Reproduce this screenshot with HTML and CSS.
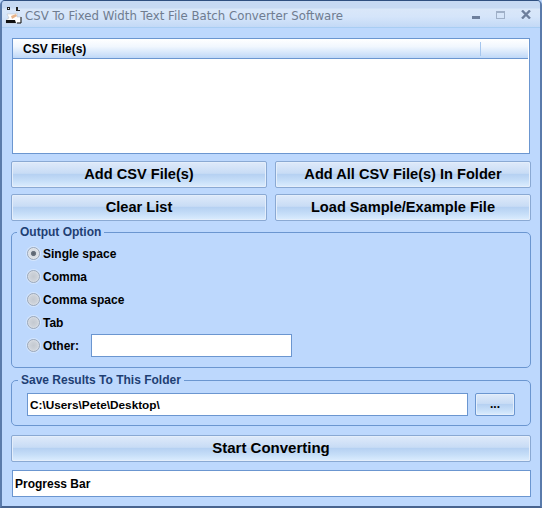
FILE: index.html
```html
<!DOCTYPE html>
<html lang="en">
<head>
    <meta charset="utf-8">
    <title>CSV To Fixed Width Text File Batch Converter Software</title>
    <link rel="stylesheet" href="styles.css">
</head>
<body>
    <div class="window">
        <div class="titlebar">
            <svg class="app-icon" width="18" height="18" viewBox="0 0 18 18">
                <rect x="2" y="1" width="3" height="3" fill="#222"/>
                <rect x="3" y="2" width="1" height="1" fill="#fff"/>
                <rect x="11" y="1" width="2" height="4" fill="#222"/>
                <rect x="11" y="4" width="4" height="1" fill="#222"/>
                <path d="M2 8h7l3-1v4h4v6H1v-3l3-2z" fill="#fff" stroke="#bbb" stroke-width="0.5"/>
                <path d="M6 10l5-2 1 2-5 3z" fill="#e8b48a"/>
                <path d="M1 14h9l1 3H1z" fill="#111"/>
                <path d="M16 11v6h-4" fill="none" stroke="#111"/>
            </svg>
            <span class="title-text">CSV To Fixed Width Text File Batch Converter Software</span>
            <div class="win-controls">
                <span class="win-min"></span>
                <span class="win-max"></span>
                <svg class="win-close" width="10" height="9" viewBox="0 0 10 9">
                    <path d="M1 .5L9 8.500M9 .5L1 8.500" stroke="#6d7f9c" stroke-width="2.4" fill="none"/>
                </svg>
            </div>
        </div>

        <div class="content">
            <div class="file-list">
                <div class="list-header">
                    <span class="list-col">CSV File(s)</span>
                    <span class="list-col-end"></span>
                </div>
            </div>

            <div class="button-grid">
                <button type="button" class="button">Add CSV File(s)</button>
                <button type="button" class="button">Add All CSV File(s) In Folder</button>
                <button type="button" class="button">Clear List</button>
                <button type="button" class="button">Load Sample/Example File</button>
            </div>

            <fieldset class="group output-group">
                <legend>Output Option</legend>
                <div class="radio-row"><span class="radio checked"></span><span>Single space</span></div>
                <div class="radio-row"><span class="radio"></span><span>Comma</span></div>
                <div class="radio-row"><span class="radio"></span><span>Comma space</span></div>
                <div class="radio-row"><span class="radio"></span><span>Tab</span></div>
                <div class="radio-row">
                    <span class="radio"></span><span>Other:</span>
                    <input type="text" class="text-box other-box">
                </div>
            </fieldset>

            <fieldset class="group save-group">
                <legend>Save Results To This Folder</legend>
                <div class="folder-row">
                    <input type="text" class="text-box folder-box" value="C:\Users\Pete\Desktop\">
                    <button type="button" class="button browse">...</button>
                </div>
            </fieldset>

            <button type="button" class="button start">Start Converting</button>
            <div class="progress">Progress Bar</div>
        </div>
    </div>
</body>
</html>
```

FILE: styles.css
```css
* {
    box-sizing: border-box;
}
body {
    margin: 0;
    background-color: #bdd8fd;
    font-family: "Liberation Sans", Arial, sans-serif;
}
.window {
    width: 542px;
    height: 508px;
    border: 1px solid #5a7bab;
    border-top-color: #2f4f80;
    border-left-width: 2px;
    border-right-width: 2px;
    border-bottom: 2px solid #48648f;
    border-radius: 5px 5px 0 0;
    background-color: #bdd8fd;
    display: flex;
    flex-direction: column;
    overflow: hidden;
}
.titlebar {
    height: 27px;
    flex: none;
    display: flex;
    align-items: center;
    padding: 4px 0 0 3px;
    background: linear-gradient(#c6d9f3 0, #c6d9f3 7px, #d9e7f9 8px, #d5e5fa 60%, #c3d9f6 100%);
    border-bottom: 1px solid #a8cdf3;
}
.app-icon {
    flex: none;
    margin-top: -3px;
}
.title-text {
    margin-left: 2px;
    font-family: "DejaVu Sans", Verdana, sans-serif;
    font-size: 11.75px;
    color: #6f7c90;
}
.win-controls {
    margin-left: auto;
    display: flex;
    align-items: center;
    padding: 0 9px 3px 0;
    gap: 16px;
}
.win-min {
    width: 8px;
    height: 3px;
    margin-top: 6px;
    background-color: #6d7f9c;
}
.win-max {
    width: 9px;
    height: 8px;
    border: 1px solid #9fb0c8;
    border-top-width: 2px;
}
.win-close {
    display: block;
}
.content {
    flex: 1;
    padding: 10px 9px 0;
    display: flex;
    flex-direction: column;
}
.file-list {
    height: 116px;
    margin: 0 0 7px 1px;
    width: 518px;
    background-color: #fff;
    border: 1px solid #6b96d0;
}
.list-header {
    height: 20px;
    padding-top: 1px;
    display: flex;
    align-items: center;
    font-size: 12px;
    font-weight: bold;
    color: #000;
    background: linear-gradient(#fff, #f1f7fe 40%, #bfd8f8);
    border-bottom: 1px solid #6b96d0;
    margin-right: 1px;
}
.list-col {
    width: 467px;
    padding-left: 10px;
}
.list-col-end {
    width: 1px;
    height: 14px;
    background-color: #a5c6ee;
}
.button {
    font-family: inherit;
    font-weight: bold;
    color: #000;
    border: 1px solid #8aa9d3;
    border-radius: 2px;
    padding: 0 0 2px;
    background: linear-gradient(#dfeafa 0, #c8dcf5 45%, #b6d1f2 50%, #c6def8 75%, #dcedfe 100%);
    box-shadow: inset 0 0 0 1px #e4eefb;
}
.button-grid {
    display: grid;
    grid-template-columns: 256px 256px;
    grid-auto-rows: 27px;
    column-gap: 8px;
    row-gap: 6px;
    margin-bottom: 4px;
}
.button-grid .button {
    font-size: 14.6px;
}
.group {
    margin: 0;
    padding: 0;
    width: 520px;
    border: 1px solid #6b96d0;
    border-radius: 5px;
    min-width: 0;
}
.group legend {
    margin-left: 5px;
    padding: 0 3px;
    font-size: 12px;
    font-weight: bold;
    color: #1f3f73;
    line-height: 14px;
}
.output-group {
    height: 143px;
    padding: 3px 0 0 0;
    display: flex;
    flex-direction: column;
}
.radio-row {
    height: 23px;
    padding-left: 15px;
    display: flex;
    align-items: center;
    font-size: 12px;
    font-weight: bold;
    color: #000;
}
.radio {
    width: 13px;
    height: 13px;
    margin-right: 3px;
    border-radius: 50%;
    border: 1px solid #9ea9b8;
    background: radial-gradient(circle at 50% 50%, #c4c9d0 0, #cdd2d9 50%, #eef1f5 100%);
    box-shadow: 0 0 0 1px rgba(255, 255, 255, 0.35);
}
.radio.checked {
    background: radial-gradient(circle at 50% 50%, #59616d 0, #6b7480 28%, #d4d9e0 38%, #f2f4f7 100%);
}
.text-box {
    height: 23px;
    padding: 0 2px;
    font-family: inherit;
    font-size: 11.8px;
    font-weight: bold;
    color: #000;
    background-color: #fff;
    border: 1px solid #6b96d0;
    border-radius: 0;
}
.other-box {
    width: 201px;
    margin-left: 12px;
}
.save-group {
    height: 53px;
    margin-top: 5px;
    padding: 6px 0 0 0;
}
.save-group legend {
    margin-left: 6px;
}
.folder-row {
    padding-left: 15px;
    display: flex;
    gap: 7px;
}
.folder-box {
    width: 441px;
}
.browse {
    width: 40px;
    height: 23px;
    font-size: 12px;
    border-color: #6b96d0;
}
.start {
    width: 520px;
    height: 27px;
    margin-top: 9px;
    font-size: 15px;
}
.progress {
    width: 519px;
    height: 27px;
    margin: 8px 0 0 1px;
    padding-left: 2px;
    display: flex;
    align-items: center;
    font-size: 12px;
    font-weight: bold;
    color: #000;
    background-color: #fff;
    border: 1px solid #6b96d0;
}
```
